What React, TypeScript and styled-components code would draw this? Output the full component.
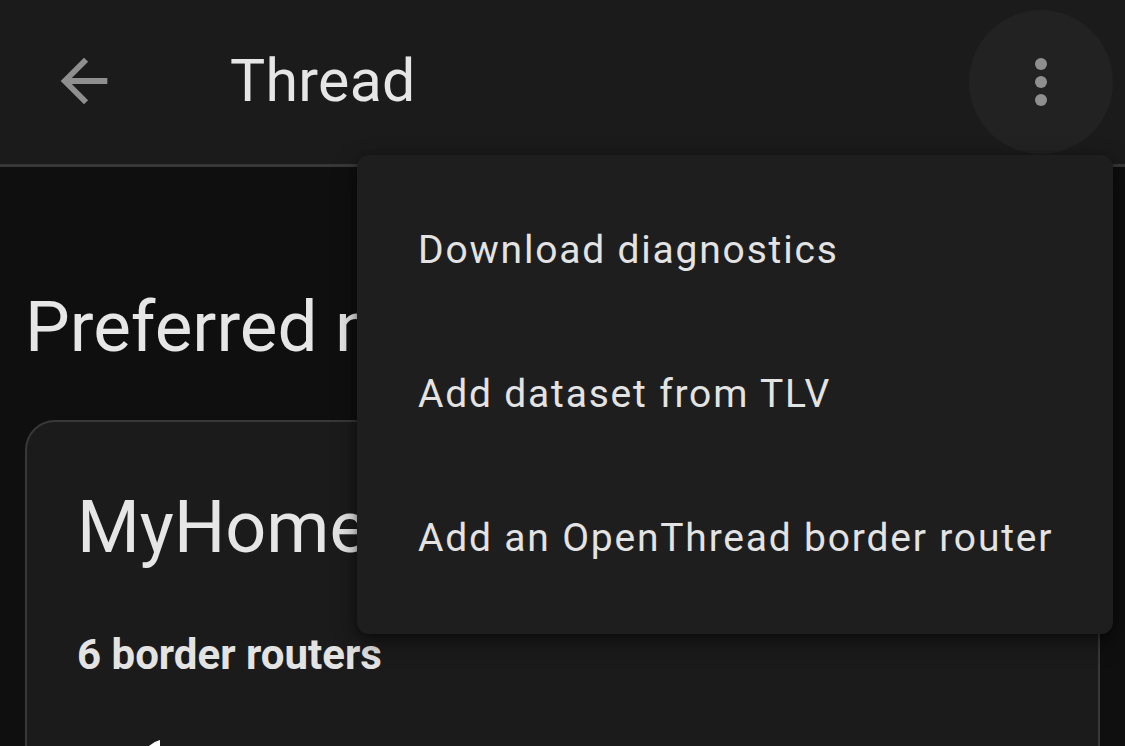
import React from "react";
import styled, { createGlobalStyle } from "styled-components";

const Global = createGlobalStyle`
  html, body { margin: 0; padding: 0; background: #0f0f0f; }
  body { width: 1125px; height: 746px; overflow: hidden; font-family: Roboto, "Noto Sans", sans-serif; }
  #root { width: 1125px; height: 746px; position: relative; }
`;

const Page = styled.div`
  width: 1125px;
  height: 746px;
  background: #0f0f0f;
  position: relative;
  overflow: hidden;
`;

const Header = styled.header`
  height: 167px;
  box-sizing: border-box;
  background: #1b1b1b;
  border-bottom: 3px solid #383838;
  display: flex;
  align-items: center;
  padding: 0 12px 0 48px;
`;

const IconButton = styled.button`
  width: 72px;
  height: 72px;
  padding: 0;
  border: none;
  background: transparent;
  display: flex;
  align-items: center;
  justify-content: center;
  color: #8f8f8f;
  margin-top: -3px;
`;

const Title = styled.h1`
  margin: -3px 0 0 110px;
  font-size: 59px;
  font-weight: 400;
  color: #e6e6e6;
  flex: 1;
  letter-spacing: 0.3px;
`;

const MoreWrap = styled.div`
  width: 144px;
  height: 144px;
  border-radius: 50%;
  background: #222222;
  display: flex;
  align-items: center;
  justify-content: center;
  margin-top: -1px;
`;

const Content = styled.main`
  padding: 125px 25px 0 25px;
  display: flex;
  flex-direction: column;
`;

const SectionTitle = styled.h2`
  margin: 0;
  font-size: 71px;
  font-weight: 400;
  color: #e6e6e6;
  line-height: 70px;
  white-space: nowrap;
`;

const Card = styled.section`
  margin-top: 58px;
  width: 1075px;
  height: 400px;
  box-sizing: border-box;
  border: 2px solid #383838;
  border-radius: 30px;
  background: #1b1b1b;
  padding: 66px 50px 0 50px;
  display: flex;
  flex-direction: column;
`;

const CardTitle = styled.div`
  font-size: 72px;
  line-height: 80px;
  color: #e6e6e6;
  white-space: nowrap;
`;

const CardSub = styled.div`
  margin-top: 64px;
  font-size: 42px;
  font-weight: 700;
  color: #e3e3e3;
  line-height: 46px;
`;

const Glyph = styled.div`
  margin-top: 62px;
  margin-left: 70px;
  color: #ffffff;
  line-height: 0;
`;

const Menu = styled.div`
  position: absolute;
  left: 357px;
  top: 155px;
  width: 756px;
  padding: 23px 0 24px;
  background: #1e1e1e;
  border-radius: 12px;
  box-shadow: 0 8px 24px rgba(0, 0, 0, 0.45), 0 2px 6px rgba(0, 0, 0, 0.3);
  display: flex;
  flex-direction: column;
`;

const MenuItem = styled.div`
  height: 144px;
  display: flex;
  align-items: center;
  padding-left: 61px;
  font-size: 39px;
  letter-spacing: 1.8px;
  color: #e3e3e3;
  white-space: nowrap;
`;

export default function App() {
  return (
    <Page>
      <Global />
      <Header>
        <IconButton aria-label="Back">
          <svg width="70" height="70" viewBox="0 0 24 24" fill="currentColor">
            <path d="M20 11H7.83l5.59-5.59L12 4l-8 8 8 8 1.41-1.41L7.83 13H20v-2z" />
          </svg>
        </IconButton>
        <Title>Thread</Title>
        <MoreWrap>
          <svg width="72" height="72" viewBox="0 0 24 24" fill="#8f8f8f">
            <circle cx="12" cy="6" r="2" />
            <circle cx="12" cy="12" r="2" />
            <circle cx="12" cy="18" r="2" />
          </svg>
        </MoreWrap>
      </Header>
      <Content>
        <SectionTitle>Preferred network</SectionTitle>
        <Card>
          <CardTitle>MyHome</CardTitle>
          <CardSub>6 border routers</CardSub>
          <Glyph>
            <svg width="16" height="30" viewBox="0 0 16 30" fill="currentColor">
              <path d="M0 8 Q5 2 13 0 L13 30 L0 30 Z" />
            </svg>
          </Glyph>
        </Card>
      </Content>
      <Menu role="menu">
        <MenuItem>Download diagnostics</MenuItem>
        <MenuItem>Add dataset from TLV</MenuItem>
        <MenuItem>Add an OpenThread border router</MenuItem>
      </Menu>
    </Page>
  );
}
